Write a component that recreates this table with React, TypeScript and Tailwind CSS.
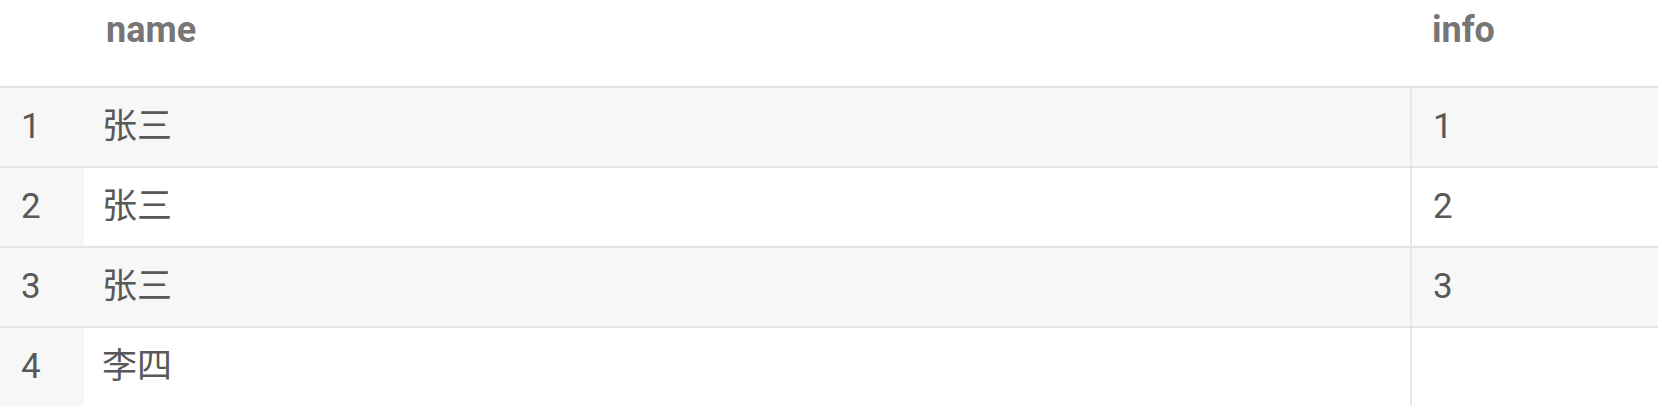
import React from "react";

const rows = [
  { idx: 1, name: "张三", info: "1" },
  { idx: 2, name: "张三", info: "2" },
  { idx: 3, name: "张三", info: "3" },
  { idx: 4, name: "李四", info: "" },
];

export default function App() {
  return (
    <div
      className="w-[1658px] bg-white text-[35px]"
      style={{ fontFamily: 'Roboto, "Noto Sans CJK SC", sans-serif' }}
    >
      <div className="flex h-[88px] border-b-2 border-[#e3e3e3] text-[36px] font-bold text-[#767676]">
        <div className="w-[84px] shrink-0" />
        <div className="flex-1 pl-[22px] pt-[6px] leading-[48px]">name</div>
        <div className="w-[248px] shrink-0 pl-[22px] pt-[6px] leading-[48px]">info</div>
      </div>
      {rows.map((r, i) => {
        const striped = i % 2 === 0;
        const last = i === rows.length - 1;
        return (
          <div
            key={r.idx}
            className={`flex text-[#585858] ${last ? "h-[78px]" : "h-[80px] border-b-2 border-[#e3e3e3]"} ${
              striped ? "bg-[#f7f7f7]" : "bg-white"
            }`}
          >
            <div className="flex w-[84px] shrink-0 items-center bg-[#f7f7f7] pl-[21px]">{r.idx}</div>
            <div className="flex flex-1 items-center pl-[18px]">{r.name}</div>
            <div className="flex w-[248px] shrink-0 items-center border-l-2 border-[#e8e8e8] pl-[21px]">
              {r.info}
            </div>
          </div>
        );
      })}
    </div>
  );
}
